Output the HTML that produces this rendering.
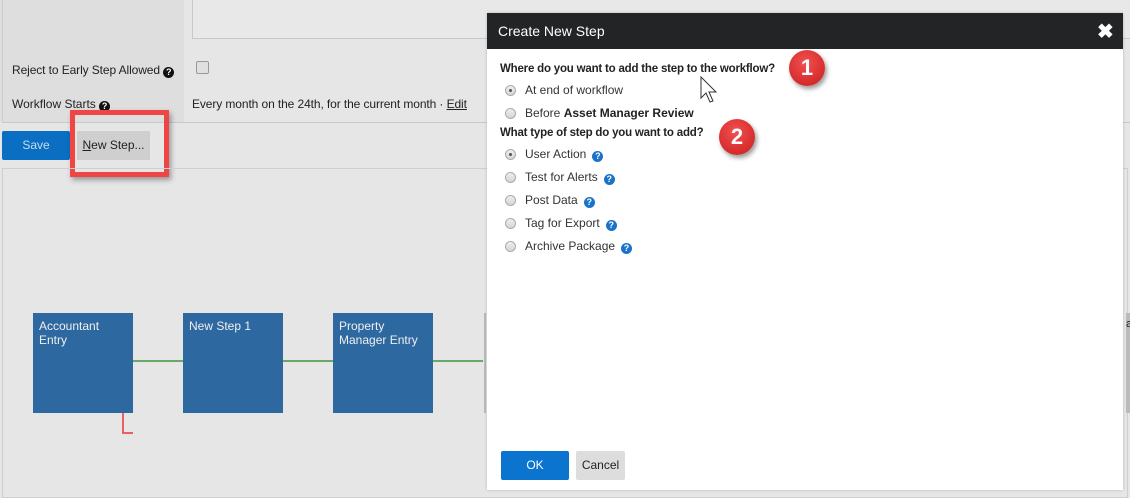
<!DOCTYPE html>
<html><head><style>
body{margin:0;width:1130px;height:495px;background:#e6e6e6;font-family:"Liberation Sans",sans-serif;position:relative;overflow:hidden;font-size:12px;color:#222}
.a{position:absolute}
.box{position:absolute;width:100px;height:100px;background:#2d68a0;color:#f0f0f0;font-size:12px;line-height:14px;padding:6px;box-sizing:border-box;top:313px}
.q{display:inline-block;width:11px;height:11px;border-radius:50%;background:#1a73c9;color:#fff;font-size:9px;font-weight:bold;text-align:center;line-height:11px;margin-left:6px;vertical-align:-1px}
.r{position:absolute;left:505px;width:11px;height:11px;border-radius:50%;border:1px solid #aaa;background:linear-gradient(#eee,#d5d5d5);box-sizing:border-box}
.r.on::after{content:"";position:absolute;left:3px;top:3px;width:3px;height:3px;border-radius:50%;background:#555}
.l{position:absolute;left:525px;font-size:12px;color:#333}
.badge{position:absolute;width:36px;height:36px;border-radius:50%;background:radial-gradient(circle at 45% 35%,#f25050,#c91c1c);color:#fff;font-weight:bold;font-size:22px;text-align:center;line-height:36px;box-shadow:2px 3px 5px rgba(0,0,0,.4)}
.bq{display:inline-block;width:11px;height:11px;border-radius:50%;background:#111;color:#fff;font-size:9px;font-weight:bold;text-align:center;line-height:11px;vertical-align:-1px}
</style></head><body>
<div class="a" style="left:0;top:0;width:184px;height:122px;background:#dedede"></div>
<div class="a" style="left:192px;top:-1px;width:940px;height:40px;border:1px solid #c8c8c8;box-sizing:border-box;background:#e8e8e8"></div>
<div class="a" style="left:2px;top:122px;width:1128px;height:1px;background:#c8c8c8"></div>
<div class="a" style="left:2px;top:0;width:1px;height:122px;background:#ccc"></div>
<div class="a" style="left:12px;top:63px;letter-spacing:-0.1px">Reject to Early Step Allowed <span class="bq">?</span></div>
<div class="a" style="left:196px;top:61px;width:11px;height:11px;border:1px solid #999;border-radius:2px;background:#e0e0e0"></div>
<div class="a" style="left:12px;top:97px">Workflow Starts <span class="bq">?</span></div>
<div class="a" style="left:192px;top:97px;letter-spacing:-0.1px">Every month on the 24th, for the current month · <u>Edit</u></div>
<div class="a" style="left:2px;top:131px;width:68px;height:29px;background:#0a6fc2;color:#c8dcef;text-align:center;line-height:29px;border-radius:2px">Save</div>
<div class="a" style="left:77px;top:131px;width:73px;height:29px;background:#cfcfcf;color:#222;text-align:center;line-height:29px"><u>N</u>ew Step...</div>
<div class="a" style="left:70px;top:110px;width:99px;height:67px;border:5px solid #f04545;box-sizing:border-box;box-shadow:2px 3px 5px rgba(0,0,0,.35)"></div>
<div class="a" style="left:2px;top:168px;width:1126px;height:330px;border:1px solid #cfcfcf;box-sizing:border-box"></div>
<div class="a" style="left:1126px;top:313px;width:4px;height:100px;background:#bbb"></div>
<div class="a" style="left:1126px;top:318px;font-size:11px">a</div>
<div class="a" style="left:133px;top:360px;width:350px;height:2px;background:#6aa86a"></div>
<div class="box" style="left:33px">Accountant<br>Entry</div>
<div class="box" style="left:183px">New Step 1</div>
<div class="box" style="left:333px">Property<br>Manager Entry</div>
<div class="a" style="left:122px;top:413px;width:2px;height:20px;background:#e86060"></div>
<div class="a" style="left:122px;top:432px;width:11px;height:2px;background:#e86060"></div>
<div class="a" style="left:484px;top:313px;width:2px;height:100px;background:#bbb"></div>
<div class="a" style="left:487px;top:13px;width:636px;height:477px;background:#fff;box-shadow:0 0 3px rgba(0,0,0,.2)"></div>
<div class="a" style="left:487px;top:13px;width:636px;height:36px;background:#232426;color:#fff;font-size:14px;line-height:36px;padding-left:11px;box-sizing:border-box">Create New Step</div>
<div class="a" style="left:1097px;top:19px;color:#fff;font-size:20px;font-weight:bold">✖</div>
<div class="a" style="left:500px;top:63px;font-weight:bold;color:#222;font-size:11.5px;letter-spacing:-0.2px">Where do you want to add the step to the workflow?</div>
<div class="r on" style="top:85px"></div><div class="l" style="top:83px">At end of workflow</div>
<div class="r" style="top:108px"></div><div class="l" style="top:106px">Before <b style="color:#222">Asset Manager Review</b></div>
<div class="a" style="left:500px;top:127px;font-weight:bold;color:#222;font-size:11.5px;letter-spacing:-0.2px">What type of step do you want to add?</div>
<div class="r on" style="top:149px"></div><div class="l" style="top:147px">User Action<span class="q">?</span></div>
<div class="r" style="top:172px"></div><div class="l" style="top:170px">Test for Alerts<span class="q">?</span></div>
<div class="r" style="top:195px"></div><div class="l" style="top:193px">Post Data<span class="q">?</span></div>
<div class="r" style="top:218px"></div><div class="l" style="top:216px">Tag for Export<span class="q">?</span></div>
<div class="r" style="top:241px"></div><div class="l" style="top:239px">Archive Package<span class="q">?</span></div>
<div class="badge" style="left:789px;top:50px">1</div>
<div class="badge" style="left:719px;top:119px">2</div>
<svg class="a" style="left:700px;top:76px" width="24" height="30"><path d="M1 1 L1 22 L6 17 L10 26 L13 25 L9 16 L16 16 Z" fill="#fff" stroke="#333" stroke-width="1"/></svg>
<div class="a" style="left:501px;top:451px;width:68px;height:29px;background:#0a74cf;color:#fff;text-align:center;line-height:29px;border-radius:2px">OK</div>
<div class="a" style="left:576px;top:451px;width:49px;height:29px;background:#ddd;color:#222;text-align:center;line-height:29px;border-radius:2px">Cancel</div>
</body></html>
